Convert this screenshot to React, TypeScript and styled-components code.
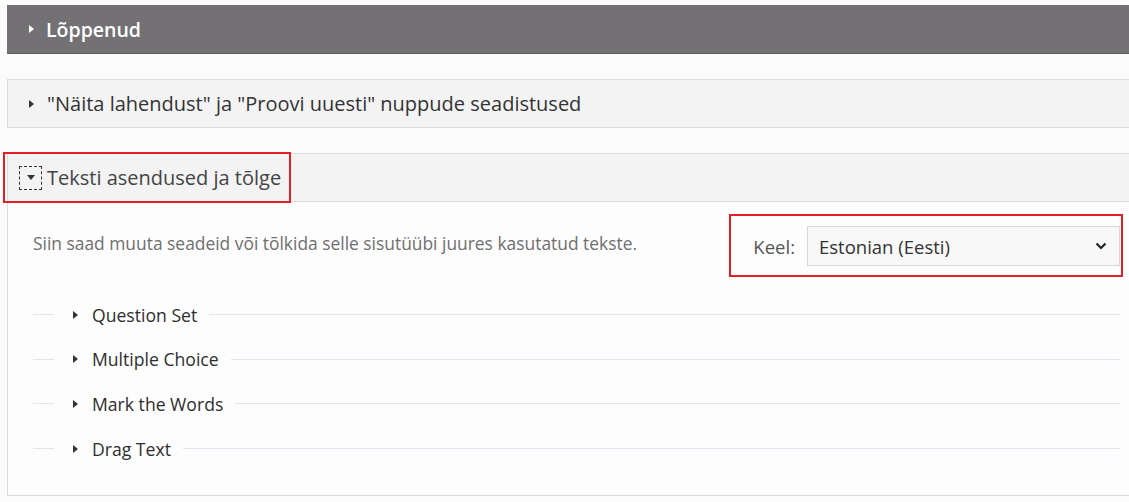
import React from "react";
import styled, { createGlobalStyle } from "styled-components";

const GlobalStyle = createGlobalStyle`
  html, body {
    margin: 0;
    padding: 0;
    background: #fbfbfb;
    font-family: "Open Sans", "Noto Sans", Arial, sans-serif;
  }
`;

const Page = styled.div`
  width: 1129px;
  height: 502px;
  overflow: hidden;
  padding: 5px 0 0 7px;
  box-sizing: border-box;
`;

const Stack = styled.div`
  width: 1140px;
  display: flex;
  flex-direction: column;
  gap: 25px;
`;

const DarkBar = styled.div`
  height: 49px;
  box-sizing: border-box;
  background: #747174;
  border-bottom: 1px solid #5f5c5f;
  display: flex;
  align-items: center;
  gap: 12px;
  padding-left: 22px;
  color: #fff;
  font-size: 19.5px;
  font-weight: 600;
`;

const Panel = styled.div`
  position: relative;
  border: 1px solid #dcdcdc;
  background: #f3f3f3;
`;

const PanelHeader = styled.div<{ $size: number; $color: string; $open?: boolean }>`
  height: 47px;
  display: flex;
  align-items: center;
  gap: ${(p) => (p.$open ? "5px" : "13px")};
  padding-left: ${(p) => (p.$open ? "11px" : "21px")};
  font-size: ${(p) => p.$size}px;
  color: ${(p) => p.$color};
  border-bottom: ${(p) => (p.$open ? "1px solid #dcdcdc" : "none")};
`;

const Caret = styled.span<{ $color: string; $down?: boolean }>`
  display: inline-block;
  width: 0;
  height: 0;
  ${(p) =>
    p.$down
      ? `border-left: 4px solid transparent; border-right: 4px solid transparent; border-top: 5px solid ${p.$color};`
      : `border-top: 4px solid transparent; border-bottom: 4px solid transparent; border-left: 5px solid ${p.$color};`}
`;

const FocusBox = styled.span`
  width: 23px;
  height: 24px;
  border: 1px dashed #333;
  display: flex;
  align-items: center;
  justify-content: center;
  box-sizing: border-box;
`;

const Highlight = styled.div`
  position: absolute;
  border: 2px solid #e31e24;
  pointer-events: none;
`;

const Body = styled.div`
  background: #fdfdfd;
  padding: 24px 26px 35px 25px;
  display: flex;
  flex-direction: column;
`;

const TopRow = styled.div`
  display: flex;
  justify-content: space-between;
  align-items: flex-start;
`;

const Description = styled.p`
  margin: 5px 0 0;
  font-size: 17.4px;
  color: #6f6f6f;
`;

const LangPicker = styled.div`
  position: relative;
  display: flex;
  align-items: center;
  gap: 12px;
  font-size: 18.5px;
  color: #555;
`;

const Select = styled.div`
  width: 313px;
  height: 40px;
  box-sizing: border-box;
  background: #f8f8f8;
  border: 1px solid #d8d8d8;
  display: flex;
  align-items: center;
  justify-content: space-between;
  padding: 0 12px 0 11px;
  font-size: 18.5px;
  color: #333;
`;

const Groups = styled.div`
  margin-top: 37.5px;
  display: flex;
  flex-direction: column;
  gap: 22.7px;
`;

const GroupRow = styled.div`
  display: flex;
  align-items: center;
  height: 22px;
  font-size: 17.6px;
  color: #2e2e2e;
  &::before {
    content: "";
    width: 21px;
    height: 1px;
    background: #e3e3ef;
    margin-right: 19px;
  }
  &::after {
    content: "";
    flex: 1;
    height: 1px;
    background: #e3e3ef;
    margin-left: 12px;
  }
`;

const GroupLabel = styled.span`
  display: flex;
  align-items: center;
  gap: 14px;
`;

const groups = ["Question Set", "Multiple Choice", "Mark the Words", "Drag Text"];

export default function App() {
  return (
    <>
      <GlobalStyle />
      <Page>
        <Stack>
          <DarkBar>
            <Caret $color="#fff" />
            Lõppenud
          </DarkBar>
          <Panel>
            <PanelHeader $size={20} $color="#333">
              <Caret $color="#333" />
              "Näita lahendust" ja "Proovi uuesti" nuppude seadistused
            </PanelHeader>
          </Panel>
          <Panel>
            <Highlight style={{ left: -5, top: -2, width: 284, height: 47 }} />
            <PanelHeader $size={20} $color="#444" $open>
              <FocusBox>
                <Caret $color="#333" $down />
              </FocusBox>
              Teksti asendused ja tõlge
            </PanelHeader>
            <Body>
              <TopRow>
                <Description>
                  Siin saad muuta seadeid või tõlkida selle sisutüübi juures kasutatud tekste.
                </Description>
                <LangPicker>
                  <Highlight style={{ left: -24, top: -12, width: 390, height: 59 }} />
                  Keel:
                  <Select>
                    Estonian (Eesti)
                    <svg width="12" height="8" viewBox="0 0 12 8">
                      <path d="M1.5 1.5 L6 6 L10.5 1.5" fill="none" stroke="#222" strokeWidth="2.2" />
                    </svg>
                  </Select>
                </LangPicker>
              </TopRow>
              <Groups>
                {groups.map((g) => (
                  <GroupRow key={g}>
                    <GroupLabel>
                      <Caret $color="#333" />
                      {g}
                    </GroupLabel>
                  </GroupRow>
                ))}
              </Groups>
            </Body>
          </Panel>
        </Stack>
      </Page>
    </>
  );
}
